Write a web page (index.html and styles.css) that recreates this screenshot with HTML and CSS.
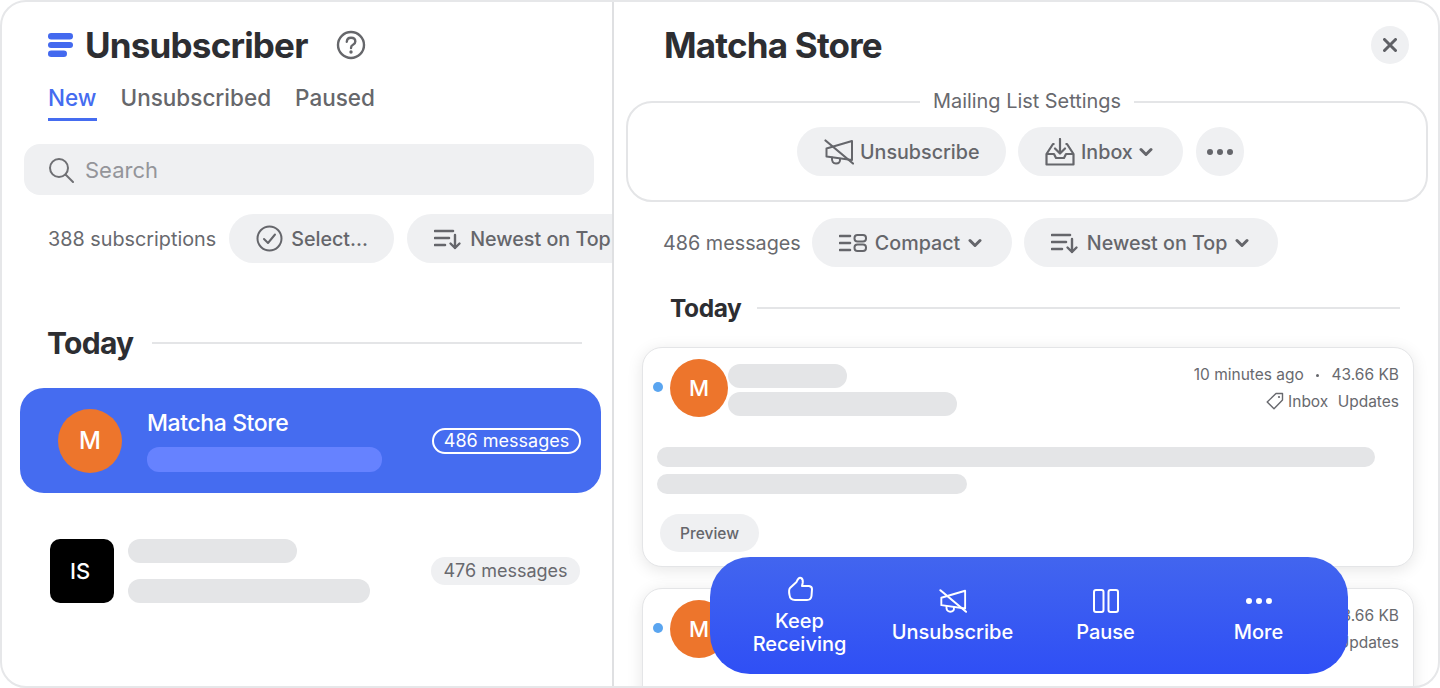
FILE: index.html
```html
<!DOCTYPE html>
<html lang="en">
<head>
    <meta charset="UTF-8">
    <meta name="viewport" content="width=device-width, initial-scale=1.0">
    <title>Unsubscriber</title>
    <link rel="stylesheet" href="styles.css">
</head>
<body>
    <svg class="defs" width="0" height="0" aria-hidden="true">
        <symbol id="i-mute" viewBox="0 0 30 26">
            <path d="M2.5 9.5 L28 2 V21 L2.5 17.5 Z" fill="none" stroke="currentColor" stroke-width="2" stroke-linejoin="round"/>
            <path d="M8 18.5 Q7.5 24.5 12 24.5 Q16.5 24.5 16 19.8" fill="none" stroke="currentColor" stroke-width="2" stroke-linecap="round"/>
            <path d="M1.5 1.5 L29 24.5" fill="none" stroke="currentColor" stroke-width="2.2" stroke-linecap="round"/>
        </symbol>
        <symbol id="i-sort" viewBox="0 0 28 22">
            <path d="M1 3 H19 M1 10 H15 M1 17 H11" fill="none" stroke="currentColor" stroke-width="2.6" stroke-linecap="round"/>
            <path d="M21 7 V20 M16.5 15.5 L21 20 L25.5 15.5" fill="none" stroke="currentColor" stroke-width="2.4" stroke-linecap="round" stroke-linejoin="round"/>
        </symbol>
        <symbol id="i-chev" viewBox="0 0 14 10">
            <path d="M2 2.5 L7 7.5 L12 2.5" fill="none" stroke="currentColor" stroke-width="3" stroke-linecap="round" stroke-linejoin="round"/>
        </symbol>
    </svg>

    <div class="frame">
        <aside class="sidebar">
            <header class="side-head">
                <svg class="logo" width="26" height="26" viewBox="0 0 26 26">
                    <rect x="0" y="1" width="25" height="6.5" rx="3.2"/>
                    <rect x="0" y="10" width="25" height="6" rx="3"/>
                    <rect x="0" y="18.5" width="19" height="6.5" rx="3.2"/>
                </svg>
                <h1>Unsubscriber</h1>
                <svg class="help" width="30" height="30" viewBox="0 0 30 30">
                    <circle cx="15" cy="15" r="13" fill="none" stroke="currentColor" stroke-width="2.4"/>
                    <path d="M10.8 11.8 Q11 7.8 15 7.8 Q19.3 7.8 19.3 11.4 Q19.3 13.6 17 14.8 Q15 15.8 15 18" fill="none" stroke="currentColor" stroke-width="2.4" stroke-linecap="round"/>
                    <circle cx="15" cy="22" r="1.7" fill="currentColor"/>
                </svg>
            </header>

            <nav class="tabs">
                <a href="#" class="active">New</a>
                <a href="#">Unsubscribed</a>
                <a href="#">Paused</a>
            </nav>

            <div class="search">
                <svg width="26" height="26" viewBox="0 0 26 26">
                    <circle cx="11" cy="11" r="9" fill="none" stroke="currentColor" stroke-width="2"/>
                    <path d="M17.5 17.5 L25 25" fill="none" stroke="currentColor" stroke-width="2" stroke-linecap="round"/>
                </svg>
                <span>Search</span>
            </div>

            <div class="filters filters-side">
                <span class="count">388 subscriptions</span>
                <button class="pill pill-select">
                    <svg width="27" height="27" viewBox="0 0 27 27">
                        <circle cx="13.5" cy="13.5" r="12" fill="none" stroke="currentColor" stroke-width="2"/>
                        <path d="M8 14 L12 18 L19 9.5" fill="none" stroke="currentColor" stroke-width="2" stroke-linecap="round" stroke-linejoin="round"/>
                    </svg>
                    Select...
                </button>
                <button class="pill pill-sort">
                    <svg width="28" height="22"><use href="#i-sort"/></svg>
                    Newest on Top
                </button>
            </div>

            <div class="day day-large"><span>Today</span></div>

            <div class="sub sub-active">
                <div class="avatar avatar-big">M</div>
                <div class="sub-text">
                    <div class="sub-name">Matcha Store</div>
                    <div class="skel skel-blue"></div>
                </div>
                <span class="badge badge-outline">486 messages</span>
            </div>

            <div class="sub sub-plain">
                <div class="square">IS</div>
                <div class="sub-lines">
                    <div class="skel skel-a"></div>
                    <div class="skel skel-b"></div>
                </div>
                <span class="badge">476 messages</span>
            </div>
        </aside>

        <main class="detail">
            <header class="detail-head">
                <h2>Matcha Store</h2>
                <button class="close">
                    <svg width="14" height="14" viewBox="0 0 14 14">
                        <path d="M1.5 1.5 L12.5 12.5 M12.5 1.5 L1.5 12.5" fill="none" stroke="currentColor" stroke-width="3" stroke-linecap="round"/>
                    </svg>
                </button>
            </header>

            <fieldset class="settings">
                <legend>Mailing List Settings</legend>
                <button class="pill pill-unsub">
                    <svg width="30" height="26"><use href="#i-mute"/></svg>
                    Unsubscribe
                </button>
                <button class="pill pill-inbox">
                    <svg width="30" height="28" viewBox="0 0 30 28">
                        <path d="M15 1 V15 M10 10.5 L15 15.5 L20 10.5" fill="none" stroke="currentColor" stroke-width="2.2" stroke-linecap="round" stroke-linejoin="round"/>
                        <path d="M9.5 6 H8 L1.5 16 V26.5 H28.5 V16 L22 6 H20.5 M1.5 16 H9 L11 20 H19 L21 16 H28.5" fill="none" stroke="currentColor" stroke-width="2.2" stroke-linejoin="round"/>
                    </svg>
                    Inbox
                    <svg class="chev" width="14" height="10"><use href="#i-chev"/></svg>
                </button>
                <button class="pill pill-dots">
                    <span class="dots"><i></i><i></i><i></i></span>
                </button>
            </fieldset>

            <div class="filters filters-detail">
                <span class="count">486 messages</span>
                <button class="pill pill-compact">
                    <svg width="28" height="18" viewBox="0 0 28 18">
                        <path d="M1 2 H11 M1 9 H11 M1 16 H11" fill="none" stroke="currentColor" stroke-width="2.6" stroke-linecap="round"/>
                        <rect x="15.5" y="1" width="11.5" height="6.5" rx="3" fill="none" stroke="currentColor" stroke-width="2"/>
                        <rect x="15.5" y="10.5" width="11.5" height="6.5" rx="3" fill="none" stroke="currentColor" stroke-width="2"/>
                    </svg>
                    Compact
                    <svg class="chev" width="14" height="10"><use href="#i-chev"/></svg>
                </button>
                <button class="pill pill-newest">
                    <svg width="28" height="22"><use href="#i-sort"/></svg>
                    Newest on Top
                    <svg class="chev" width="14" height="10"><use href="#i-chev"/></svg>
                </button>
            </div>

            <div class="day day-small"><span>Today</span></div>

            <article class="card">
                <div class="card-top">
                    <span class="unread"></span>
                    <div class="avatar">M</div>
                    <div class="card-lines">
                        <div class="skel skel-c"></div>
                        <div class="skel skel-d"></div>
                    </div>
                    <div class="meta">
                        <div>10 minutes ago <b class="sep"></b> 43.66 KB</div>
                        <div class="meta-tags">
                            <svg width="18" height="18" viewBox="0 0 18 18">
                                <path d="M10 1.5 H16.5 V8 L8 16.8 L1.2 10 Z" fill="none" stroke="currentColor" stroke-width="1.4" stroke-linejoin="round"/>
                                <circle cx="13" cy="5" r="1.1" fill="currentColor"/>
                            </svg>
                            Inbox <span class="tag-gap">Updates</span>
                        </div>
                    </div>
                </div>
                <div class="skel skel-e"></div>
                <div class="skel skel-f"></div>
                <button class="preview">Preview</button>
            </article>

            <article class="card">
                <div class="card-top">
                    <span class="unread"></span>
                    <div class="avatar">M</div>
                    <div class="card-lines">
                        <div class="skel skel-c"></div>
                        <div class="skel skel-d"></div>
                    </div>
                    <div class="meta">
                        <div>10 minutes ago <b class="sep"></b> 43.66 KB</div>
                        <div class="meta-tags">Inbox <span class="tag-gap">Updates</span></div>
                    </div>
                </div>
                <div class="skel skel-e"></div>
            </article>
        </main>

        <!-- floating bar over the message list -->
        <div class="actions">
            <button class="action">
                <svg width="26" height="28" viewBox="0 0 26 28">
                    <path d="M3 13 L9.5 7 Q11.5 2 14 3 Q16.3 4 15.7 8 L15 11 L22 11 Q25 11.5 25 14 L24.5 21 Q24 25 20 25 L8 25 Q3 25 2.5 20 Q1.5 15 3 13 Z" fill="none" stroke="currentColor" stroke-width="2" stroke-linejoin="round"/>
                </svg>
                <span>Keep<br>Receiving</span>
            </button>
            <button class="action">
                <svg width="28" height="26"><use href="#i-mute"/></svg>
                <span>Unsubscribe</span>
            </button>
            <button class="action">
                <svg width="28" height="26" viewBox="0 0 28 26">
                    <rect x="2" y="2" width="9.5" height="22" rx="2" fill="none" stroke="currentColor" stroke-width="2"/>
                    <rect x="16.5" y="2" width="9.5" height="22" rx="2" fill="none" stroke="currentColor" stroke-width="2"/>
                </svg>
                <span>Pause</span>
            </button>
            <button class="action">
                <span class="dots dots-white"><i></i><i></i><i></i></span>
                <span>More</span>
            </button>
        </div>
    </div>
</body>
</html>
```

FILE: styles.css
```css
* {
    margin: 0;
    padding: 0;
    box-sizing: border-box;
}

body {
    font-family: 'Inter', 'Liberation Sans', sans-serif;
    background: #fff;
    color: #68696e;
}

button {
    font-family: inherit;
    border: none;
    cursor: pointer;
}

.defs {
    position: absolute;
}

.frame {
    position: relative;
    display: flex;
    width: 1440px;
    height: 688px;
    border: 2px solid #e6e7e9;
    border-radius: 26px;
    overflow: hidden;
    background: #fff;
}

/* left column */
.sidebar {
    flex: 0 0 612px;
    border-right: 2px solid #dfe0e2;
    overflow: hidden;
}

.side-head {
    display: flex;
    align-items: center;
    height: 44px;
    margin: 21px 0 0 46px;
}

.logo {
    fill: #4369ef;
    margin-right: 11px;
}

h1, h2 {
    font-size: 35px;
    line-height: 44px;
    font-weight: 700;
    letter-spacing: -0.8px;
    color: #2d2e32;
}

.help {
    margin-left: 28px;
    color: #66676b;
}

.tabs {
    display: flex;
    gap: 24px;
    margin: 18px 0 0 46px;
}

.tabs a {
    color: #66676b;
    text-decoration: none;
    font-size: 22.5px;
    font-weight: 500;
    line-height: 26px;
    height: 36px;
}

.tabs a.active {
    color: #456cf0;
    border-bottom: 3px solid #456cf0;
}

.search {
    display: flex;
    align-items: center;
    gap: 11px;
    height: 51px;
    margin: 23px 18px 0 22px;
    padding-left: 24px;
    border-radius: 16px;
    background: #eff0f2;
    color: #6f7074;
    font-size: 22px;
}

.search span {
    color: #94959a;
}

.filters {
    display: flex;
    align-items: center;
    gap: 12px;
    margin: 19px 0 0 46px;
    white-space: nowrap;
}

.filters-side {
    gap: 13px;
}

.count {
    font-size: 19.8px;
}

.pill {
    flex-shrink: 0;
    display: flex;
    align-items: center;
    height: 49px;
    border-radius: 25px;
    background: #eff0f2;
    color: #65666b;
    font-size: 19.7px;
    font-weight: 500;
}

.pill-select {
    gap: 8px;
    width: 165px;
    padding-left: 27px;
}

.pill-sort {
    gap: 8px;
    width: 230px;
    padding-left: 27px;
}

.day {
    display: flex;
    align-items: center;
    font-weight: 700;
    color: #2d2e32;
}

.day::after {
    content: "";
    flex: 1;
    height: 2px;
    background: #e4e5e7;
}

.day-large {
    margin: 60px 30px 0 45px;
    height: 40px;
    font-size: 30px;
    letter-spacing: -0.7px;
    gap: 19px;
}

.sub {
    display: flex;
    align-items: center;
}

.sub-active {
    height: 105px;
    margin: 25px 11px 0 18px;
    padding: 0 20px 0 38px;
    border-radius: 24px;
    background: #456cf0;
    color: #fff;
}

.avatar {
    flex-shrink: 0;
    display: flex;
    align-items: center;
    justify-content: center;
    width: 58px;
    height: 58px;
    margin-top: -1px;
    border-radius: 50%;
    background: #ed752c;
    color: #fff;
    font-size: 22px;
    font-weight: 500;
}

.avatar-big {
    width: 64px;
    height: 64px;
    margin-top: 0;
    font-size: 24px;
}

.sub-text {
    flex: 1;
    margin: 0 0 2px 25px;
}

.sub-name {
    font-size: 23px;
    font-weight: 500;
    line-height: 30px;
    letter-spacing: -0.4px;
    margin-bottom: 9px;
}

.skel {
    height: 24px;
    border-radius: 12px;
    background: #e4e5e7;
}

.skel-blue {
    width: 235px;
    height: 25px;
    background: #6682ff;
}

.badge {
    flex-shrink: 0;
    width: 149px;
    height: 28px;
    line-height: 28px;
    text-align: center;
    border-radius: 14px;
    background: #eff0f2;
    font-size: 18px;
    white-space: nowrap;
}

.badge-outline {
    height: 26px;
    line-height: 22px;
    background: none;
    color: #fff;
    border: 2px solid #fff;
}

.sub-plain {
    height: 66px;
    margin: 45px 32px 0 48px;
}

.square {
    flex-shrink: 0;
    display: flex;
    align-items: center;
    justify-content: center;
    width: 64px;
    height: 64px;
    padding-right: 4px;
    border-radius: 10px;
    background: #000;
    color: #fff;
    font-size: 22px;
    font-weight: 500;
}

.sub-lines {
    flex: 1;
    margin-left: 14px;
    display: flex;
    flex-direction: column;
    gap: 16px;
}

.skel-a {
    width: 169px;
}

.skel-b {
    width: 242px;
}

/* right column */
.detail {
    flex: 1;
    min-width: 0;
    overflow: hidden;
}

.detail-head {
    display: flex;
    align-items: center;
    justify-content: space-between;
    height: 44px;
    margin: 21px 29px 0 50px;
}

.close {
    display: flex;
    align-items: center;
    justify-content: center;
    width: 38px;
    height: 38px;
    border-radius: 50%;
    background: #eff0f2;
    color: #5f6065;
}

.settings {
    display: flex;
    justify-content: center;
    gap: 12px;
    height: 113px;
    margin: 22px 10px 0 12px;
    padding: 12px 0 0 0;
    border: 2px solid #e4e5e7;
    border-radius: 26px;
}

.settings legend {
    margin: 0 auto;
    padding: 0 13px 2px;
    font-size: 19.9px;
    line-height: 24px;
}

.pill-unsub {
    gap: 6px;
    width: 209px;
    padding-left: 27px;
}

.pill-inbox {
    gap: 6px;
    width: 165px;
    padding-left: 27px;
}

.pill-dots {
    justify-content: center;
    width: 48px;
    margin: 0 13px 0 1px;
}

.dots {
    display: flex;
    gap: 4px;
}

.dots i {
    width: 6px;
    height: 6px;
    border-radius: 50%;
    background: #65666b;
}

.dots-white {
    height: 26px;
    align-items: center;
}

.dots-white i {
    background: #fff;
}

.filters-detail {
    margin: 16px 0 0 49px;
}

.pill-compact {
    gap: 8px;
    width: 200px;
    margin-left: -1px;
    padding-left: 27px;
}

.pill-newest {
    gap: 8px;
    width: 254px;
    padding-left: 27px;
}

.day-small {
    margin: 21px 38px 0 56px;
    height: 40px;
    font-size: 24.5px;
    letter-spacing: -0.4px;
    gap: 16px;
}

.card {
    height: 220px;
    margin: 19px 24px 21px 28px;
    padding: 12px 14px 0 14px;
    border: 1px solid #e4e5e7;
    border-radius: 20px;
    background: #fff;
    box-shadow: 0 3px 16px rgba(0, 0, 0, 0.1);
}

.card + .card {
    margin-top: 0;
}

.card-top {
    display: flex;
    align-items: flex-start;
    height: 87px;
}

.unread {
    flex-shrink: 0;
    width: 10px;
    height: 10px;
    margin: 22px 7px 0 -4px;
    border-radius: 50%;
    background: #5aa5f0;
}

.card-lines {
    flex: 1;
    padding-top: 4px;
    display: flex;
    flex-direction: column;
    gap: 4px;
}

.skel-c {
    width: 119px;
}

.skel-d {
    width: 229px;
}

.meta {
    padding-top: 1px;
    font-size: 15.5px;
    line-height: 27px;
    text-align: right;
    white-space: nowrap;
}

.sep {
    display: inline-block;
    width: 3px;
    height: 3px;
    margin: 0 8px;
    vertical-align: middle;
    border-radius: 50%;
    background: #65666b;
}

.meta-tags svg {
    vertical-align: -3px;
}

.tag-gap {
    margin-left: 5px;
}

.skel-e {
    width: 718px;
    height: 20px;
    border-radius: 10px;
}

.skel-f {
    width: 310px;
    height: 20px;
    border-radius: 10px;
    margin-top: 7px;
}

.preview {
    display: block;
    width: 99px;
    height: 38px;
    margin: 20px 0 0 3px;
    border-radius: 19px;
    background: #eff0f2;
    color: #65666b;
    font-size: 15.5px;
    font-weight: 500;
}

/* floating bar */
.actions {
    position: absolute;
    right: 90px;
    bottom: 12px;
    display: flex;
    align-items: center;
    justify-content: center;
    width: 638px;
    height: 117px;
    border-radius: 40px;
    background: linear-gradient(180deg, #4265ef, #2f4ff5);
}

.action {
    display: flex;
    flex-direction: column;
    align-items: center;
    gap: 7px;
    width: 153px;
    background: none;
    color: #fff;
    font-size: 20px;
    font-weight: 500;
    line-height: 23px;
}
```
